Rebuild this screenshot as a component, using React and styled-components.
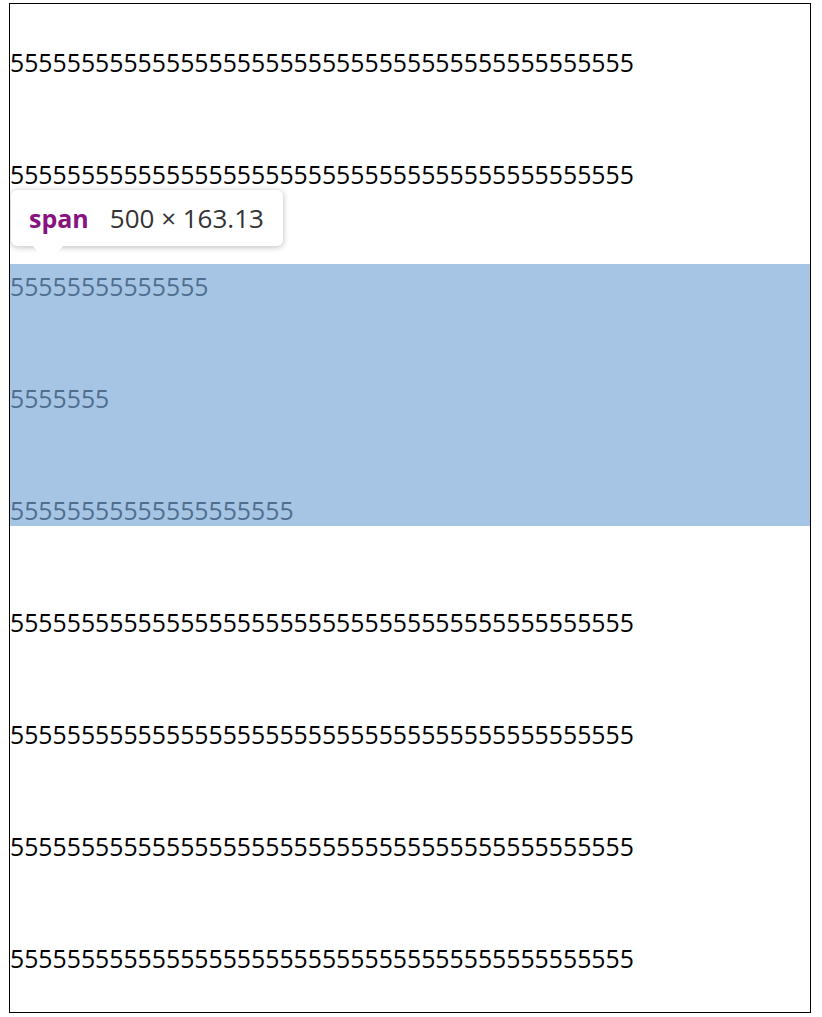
import React from 'react'
import styled, { createGlobalStyle } from 'styled-components'

const GlobalStyle = createGlobalStyle`
  html, body {
    margin: 0;
    padding: 0;
    background: #fff;
  }
  body {
    padding: 3px 0 0 9px;
    font-family: "Open Sans", "Noto Sans", sans-serif;
  }
`

const Frame = styled.div`
  position: relative;
  width: 800px;
  border: 1px solid #000;
  padding-top: 2px;
  height: 1006px;
  overflow: hidden;
`

const Line = styled.div`
  height: 112px;
  line-height: 112px;
  font-size: 24.8px;
  color: #000;
  white-space: nowrap;
`

const Highlight = styled.div`
  position: absolute;
  left: 0;
  right: 0;
  top: 260px;
  height: 262px;
  background: rgba(120, 165, 214, 0.66);
  pointer-events: none;
`

const Tip = styled.div`
  position: absolute;
  left: 1px;
  top: 186px;
  width: 272px;
  height: 56px;
  box-sizing: border-box;
  padding: 0 18px;
  display: flex;
  align-items: center;
  gap: 21px;
  background: #fff;
  border-radius: 6px;
  box-shadow: 0 1px 6px rgba(0, 0, 0, 0.28);
  font-size: 26px;
  white-space: nowrap;

  &::after {
    content: '';
    position: absolute;
    left: 22px;
    top: 56px;
    border-left: 15px solid transparent;
    border-right: 15px solid transparent;
    border-top: 17px solid #fff;
  }
`

const Tag = styled.span`
  color: #881280;
  font-weight: 700;
  font-size: 25px;
`

const Size = styled.span`
  color: #333;
`

const lines = [
  '5'.repeat(44),
  '5'.repeat(44),
  '5'.repeat(14),
  '5'.repeat(7),
  '5'.repeat(20),
  '5'.repeat(44),
  '5'.repeat(44),
  '5'.repeat(44),
  '5'.repeat(44),
]

export default function App() {
  return (
    <>
      <GlobalStyle />
      <Frame>
        {lines.map((text, i) => (
          <Line key={i}>{text}</Line>
        ))}
        <Highlight />
        <Tip>
          <Tag>span</Tag>
          <Size>500 × 163.13</Size>
        </Tip>
      </Frame>
    </>
  )
}
